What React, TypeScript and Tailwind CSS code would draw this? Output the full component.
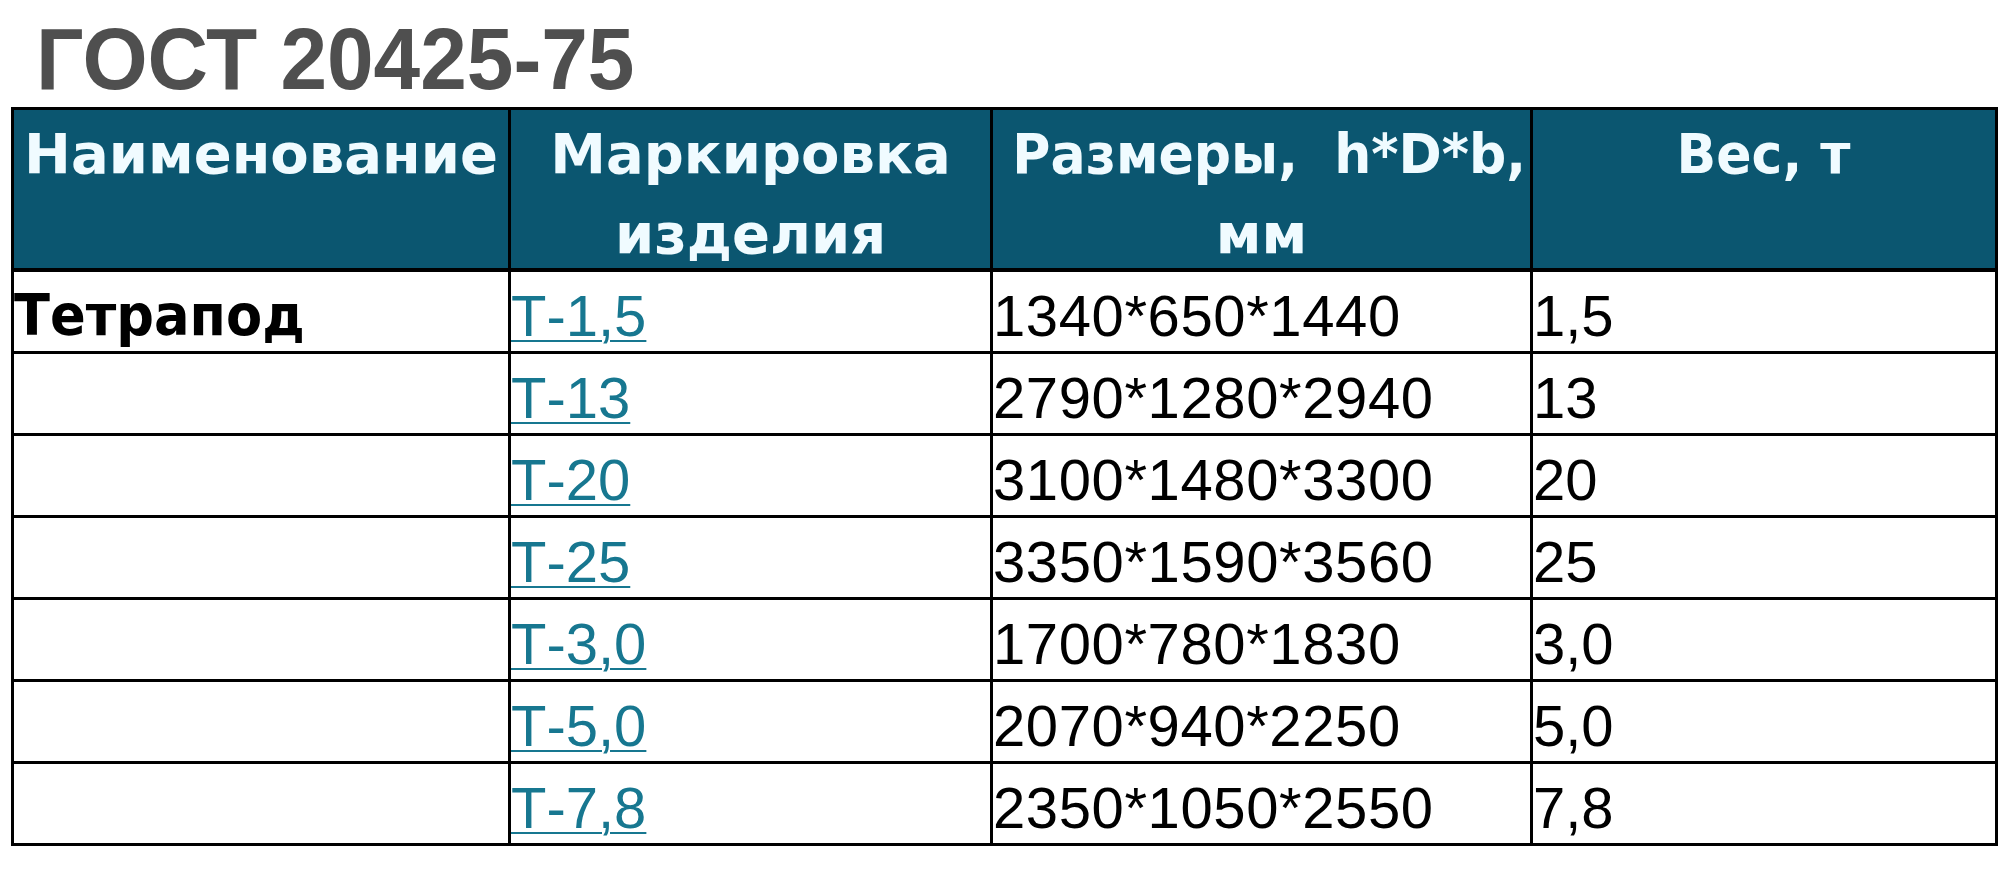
import React from "react";

const rows: [string, string, string][] = [
  ["Т-1,5", "1340*650*1440", "1,5"],
  ["Т-13", "2790*1280*2940", "13"],
  ["Т-20", "3100*1480*3300", "20"],
  ["Т-25", "3350*1590*3560", "25"],
  ["Т-3,0", "1700*780*1830", "3,0"],
  ["Т-5,0", "2070*940*2250", "5,0"],
  ["Т-7,8", "2350*1050*2550", "7,8"],
];

function HeadLine({ children, narrow }: { children: React.ReactNode; narrow?: boolean }) {
  return (
    <div className="whitespace-pre text-center">
      <span className={narrow ? "inline-block scale-x-[0.93]" : "inline-block scale-x-[1.0]"}>{children}</span>
    </div>
  );
}

export default function App() {
  return (
    <div className="w-[2000px] h-[872px] bg-white overflow-hidden">
      <div className="h-[107px] pt-[15px] pl-[36px]">
        <span className="inline-block origin-left scale-x-[0.952] font-['Liberation_Sans',Arial,sans-serif] font-bold text-[88px] leading-[88px] text-[#4f4f4f]">
          ГОСТ 20425-75
        </span>
      </div>

      <div className="ml-[11px] w-[1987px] border-[3px] border-black">
        <div className="grid grid-cols-[497px_482px_540px_462px] h-[162px] border-b-[4px] border-black bg-[#0b5670] text-[#f0fbff] font-['DejaVu_Sans',sans-serif] font-bold text-[56px] leading-[80px]">
          <div className="border-r-[3px] border-black pt-[4px]">
            <HeadLine>Наименование</HeadLine>
          </div>
          <div className="border-r-[3px] border-black pt-[4px]">
            <HeadLine>Маркировка</HeadLine>
            <HeadLine>изделия</HeadLine>
          </div>
          <div className="border-r-[3px] border-black pt-[4px]">
            <HeadLine narrow>{"Размеры,  h*D*b,"}</HeadLine>
            <HeadLine>мм</HeadLine>
          </div>
          <div className="pt-[4px]">
            <HeadLine narrow>Вес, т</HeadLine>
          </div>
        </div>

        {rows.map(([mark, size, weight], i) => (
          <div
            key={mark}
            className={
              i < rows.length - 1
                ? "grid grid-cols-[497px_482px_540px_462px] h-[82px] border-b-[3px] border-black"
                : "grid grid-cols-[497px_482px_540px_462px] h-[79px]"
            }
          >
            <div className="border-r-[3px] border-black pt-[8px] leading-[71px] font-['DejaVu_Sans',sans-serif] font-bold text-[57px] text-black whitespace-nowrap">
              {i === 0 ? (
                <span className="inline-block origin-left scale-x-[0.925]">Тетрапод</span>
              ) : null}
            </div>
            <div className="border-r-[3px] border-black pt-[9px] leading-[70px] font-['Liberation_Sans',Arial,sans-serif] text-[58px] whitespace-nowrap">
              <a
                href="#"
                className="text-[#177790] underline decoration-[2px] underline-offset-[4px]"
              >
                {mark}
              </a>
            </div>
            <div className="border-r-[3px] border-black pt-[9px] leading-[70px] font-['Liberation_Sans',Arial,sans-serif] text-[58px] tracking-[0.6px] text-black whitespace-nowrap">
              {size}
            </div>
            <div className="pt-[9px] leading-[70px] font-['Liberation_Sans',Arial,sans-serif] text-[58px] text-black whitespace-nowrap">
              {weight}
            </div>
          </div>
        ))}
      </div>
    </div>
  );
}
